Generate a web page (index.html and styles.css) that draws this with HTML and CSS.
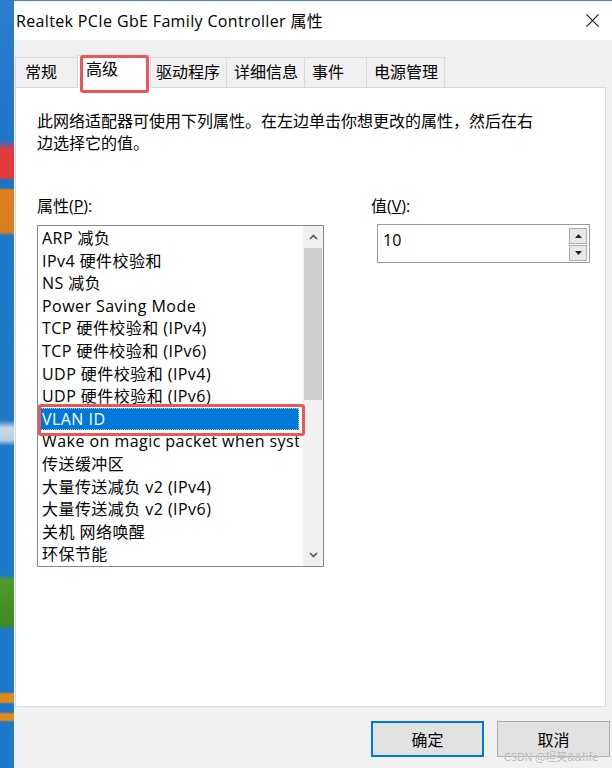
FILE: index.html
```html
<!DOCTYPE html>
<html lang="zh-CN">
<head>
<meta charset="utf-8">
<title>Realtek PCIe GbE Family Controller 属性</title>
<link rel="stylesheet" href="styles.css">
</head>
<body>
<div class="desktop"></div>
<div class="window">
  <div class="titlebar">
    <span class="title">Realtek PCIe GbE Family Controller 属性</span>
    <span class="winctl"><svg class="winctl-icon" width="16" height="16" viewBox="0 0 16 16"><path d="M1.5 1.5L14.5 14.5M14.5 1.5L1.5 14.5" stroke="#1a1a1a" stroke-width="1.2" fill="none"/></svg></span>
  </div>
  <div class="content">
    <div class="tabs">
      <div class="tab">常规</div>
      <div class="tab active">高级</div>
      <div class="tab">驱动程序</div>
      <div class="tab">详细信息</div>
      <div class="tab">事件</div>
      <div class="tab">电源管理</div>
    </div>
    <div class="panel">
      <p class="desc">此网络适配器可使用下列属性。在左边单击你想更改的属性，然后在右边选择它的值。</p>
      <div class="fields">
        <div class="col-left">
          <div class="label">属性(<u>P</u>):</div>
          <div class="listbox">
            <div class="items">
              <div class="item">ARP 减负</div>
              <div class="item">IPv4 硬件校验和</div>
              <div class="item">NS 减负</div>
              <div class="item">Power Saving Mode</div>
              <div class="item">TCP 硬件校验和 (IPv4)</div>
              <div class="item">TCP 硬件校验和 (IPv6)</div>
              <div class="item">UDP 硬件校验和 (IPv4)</div>
              <div class="item">UDP 硬件校验和 (IPv6)</div>
              <div class="item selected">VLAN ID</div>
              <div class="item">Wake on magic packet when system is in the S0ix power state</div>
              <div class="item">传送缓冲区</div>
              <div class="item">大量传送减负 v2 (IPv4)</div>
              <div class="item">大量传送减负 v2 (IPv6)</div>
              <div class="item">关机 网络唤醒</div>
              <div class="item">环保节能</div>
            </div>
            <div class="scrollbar">
              <div class="sb-arrow"><svg width="9" height="6" viewBox="0 0 9 6"><path d="M1 5L4.5 1.5L8 5" stroke="#555" stroke-width="1.6" fill="none"/></svg></div>
              <div class="sb-track"><div class="sb-thumb"></div></div>
              <div class="sb-arrow"><svg width="9" height="6" viewBox="0 0 9 6"><path d="M1 1L4.5 4.5L8 1" stroke="#555" stroke-width="1.6" fill="none"/></svg></div>
            </div>
          </div>
        </div>
        <div class="col-right">
          <div class="label">值(<u>V</u>):</div>
          <div class="spinbox">
            <span class="spin-value">10</span>
            <div class="spinner">
              <div class="spin-btn"><svg width="7" height="4" viewBox="0 0 7 4"><path d="M0 4L3.5 0L7 4Z" fill="#222"/></svg></div>
              <div class="spin-btn"><svg width="7" height="4" viewBox="0 0 7 4"><path d="M0 0L3.5 4L7 0Z" fill="#222"/></svg></div>
            </div>
          </div>
        </div>
      </div>
    </div>
    <div class="buttons">
      <button class="btn default">确定</button>
      <button class="btn">取消</button>
      <span class="watermark">CSDN @坦笑&amp;&amp;life</span>
    </div>
  </div>
</div>
</body>
</html>
```
FILE: styles.css
```css
html, body {
  margin: 0;
  padding: 0;
}
body {
  width: 612px;
  height: 768px;
  overflow: hidden;
  display: flex;
  font-family: "Open Sans", "Noto Sans CJK SC", sans-serif;
  font-size: 16px;
  color: #000;
  background: #1f78c8;
}
.desktop {
  width: 14px;
  flex: none;
  background: linear-gradient(to bottom,
    #2a7fcf 0, #1f76c6 140px,
    #e23b3b 150px, #e23b3b 178px,
    #1d74c4 180px, #1d74c4 188px,
    #e07d1c 190px, #d48022 232px,
    #1f78c8 236px, #2078c6 420px,
    #c9d8e6 428px, #b9cde0 440px,
    #1f78c8 446px, #1f78c8 575px,
    #4f9a2a 580px, #3f8a23 625px,
    #1f78c8 630px, #1f78c8 692px,
    #e08a1c 694px, #e08a1c 702px,
    #1f78c8 704px, #1f78c8 712px,
    #e08a1c 714px, #e08a1c 720px,
    #1f78c8 722px);
}
.window {
  width: 598px;
  flex: none;
  display: flex;
  flex-direction: column;
  background: #f0f0f0;
  border-top: 1px solid #3d87d2;
}
.titlebar {
  box-sizing: border-box;
  width: 598px;
  height: 39px;
  flex: none;
  background: #fff;
  display: flex;
  align-items: center;
  padding: 0 0 0 2px;
}
.title {
  flex: 1;
  font-size: 16px;
  line-height: 20px;
  letter-spacing: 0.35px;
  white-space: nowrap;
}
.winctl {
  flex: none;
  width: 40px;
  height: 39px;
  display: flex;
  align-items: center;
  justify-content: center;
}
.winctl-icon {
  display: block;
  width: 15px;
  height: 15px;
}
.content {
  flex: 1;
  display: flex;
  flex-direction: column;
  padding: 0 6px 0 1px;
}
.tabs {
  display: flex;
  align-items: flex-end;
  padding-top: 15px;
  height: 32px;
  flex: none;
}
.tab {
  box-sizing: border-box;
  height: 30px;
  min-width: 62px;
  padding: 0 6px 0 7px;
  border: 1px solid #d9d9d9;
  border-bottom: none;
  border-right: none;
  background: #f0f0f0;
  line-height: 28px;
  font-size: 16px;
}
.tab:first-child { min-width: 64px; padding-left: 9px; }
.tab:nth-child(3) { border-left: none; }
.tab:last-child { border-right: 1px solid #d9d9d9; }
.tab.active {
  position: relative;
  z-index: 1;
  height: 33px;
  margin: 0 -2px -1px;
  padding: 0 12px 0 8px;
  min-width: 74px;
  background: #fff;
  border-right: 1px solid #d9d9d9;
  line-height: 26px;
}
.tab.active::after {
  content: "";
  position: absolute;
  top: -1px;
  left: 2px;
  right: 1px;
  bottom: -5px;
  border: 3px solid #f25454;
  border-radius: 3px;
}
.panel {
  box-sizing: border-box;
  flex: none;
  height: 620px;
  background: #fff;
  border: 1px solid #d9d9d9;
  padding: 22px 0 0 21px;
}
.desc {
  margin: 0;
  max-width: 500px;
  line-height: 22px;
  font-size: 16px;
}
.fields {
  display: grid;
  grid-template-columns: 287px 219px;
  column-gap: 47px;
  margin-top: 41px;
}
.label {
  line-height: 22px;
  height: 22px;
  margin-bottom: 8px;
}
.col-right .label {
  margin-bottom: 7px;
}
.listbox {
  box-sizing: border-box;
  height: 342px;
  border: 1px solid #828790;
  display: flex;
  background: #fff;
}
.items {
  flex: 1;
  min-width: 0;
  padding: 1px 4px 0 2px;
  position: relative;
  z-index: 1;
}
.item {
  height: 22.6px;
  line-height: 22.6px;
  padding-left: 2px;
  white-space: nowrap;
  overflow: hidden;
  letter-spacing: 0.45px;
}
.item.selected {
  position: relative;
  overflow: visible;
  background: #0078d7;
  color: #fff;
  outline: 1px dotted #a9cff0;
  outline-offset: -1px;
}
.item.selected::after {
  content: "";
  position: absolute;
  top: -4px;
  bottom: -6px;
  left: -2px;
  right: -6px;
  border: 3px solid #f25454;
  border-radius: 3px;
}
.scrollbar {
  width: 20px;
  flex: none;
  display: flex;
  flex-direction: column;
  background: #f0f0f0;
}
.sb-arrow {
  height: 22px;
  display: flex;
  align-items: center;
  justify-content: center;
}
.sb-track {
  flex: 1;
  padding: 0 1px;
}
.sb-thumb {
  height: 152px;
  background: #cdcdcd;
}
.spinbox {
  box-sizing: border-box;
  margin-left: 6px;
  height: 39px;
  border: 1px solid #9a9a9a;
  display: flex;
  align-items: flex-start;
  background: #fff;
}
.spin-value {
  flex: 1;
  padding: 4px 0 0 5px;
  line-height: 22px;
}
.spinner {
  width: 18px;
  margin: 3px 2px 0 0;
  display: flex;
  flex-direction: column;
  gap: 1px;
}
.spin-btn {
  box-sizing: border-box;
  height: 16px;
  border: 1px solid #acacac;
  background: #e8e8e8;
  display: flex;
  align-items: center;
  justify-content: center;
}
.buttons {
  position: relative;
  display: flex;
  justify-content: flex-end;
  gap: 13px;
  margin: 14px -4px 0 0;
}
.btn {
  box-sizing: border-box;
  width: 113px;
  height: 36px;
  font-family: "Noto Sans CJK SC", sans-serif;
  font-size: 16px;
  background: #e1e1e1;
  border: 1px solid #adadad;
  color: #000;
  padding: 0;
}
.btn.default {
  border: 2px solid #0078d7;
}
.watermark {
  position: absolute;
  right: 12px;
  bottom: -6px;
  font-family: "Noto Sans CJK SC", sans-serif;
  font-size: 11px;
  line-height: 13px;
  color: #b4b4b4;
  text-shadow: 0 0 1px #fff;
}
```
